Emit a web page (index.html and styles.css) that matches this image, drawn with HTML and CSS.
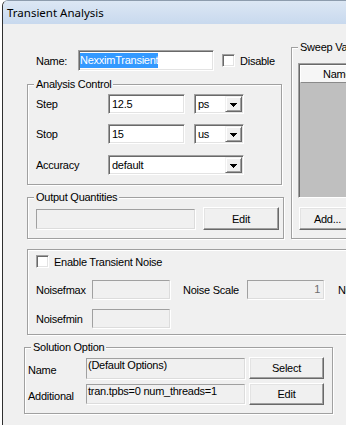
FILE: index.html
```html
<!DOCTYPE html>
<html lang="en">

<head>
  <meta charset="UTF-8">
  <meta name="viewport" content="width=device-width, initial-scale=1.0">
  <title>Transient Analysis</title>
  <link rel="stylesheet" href="styles.css">
</head>

<body>
  <div class="window">
    <div class="titlebar">Transient Analysis</div>

    <div class="client">
      <div class="top">
        <div class="left-col">
          <div class="name-row">
            <span class="name-label">Name:</span>
            <div class="field name-field"><span class="selected">NexximTransient</span></div>
            <span class="check disable-check"></span>
            <span class="check-text">Disable</span>
          </div>

          <div class="group analysis">
            <div class="caption">Analysis Control</div>
            <div class="ctl-row first">
              <span class="ctl-label">Step</span>
              <div class="field value">12.5</div>
              <div class="field combo unit">ps
                <span class="drop"><svg width="7" height="4" viewBox="0 0 7 4" shape-rendering="crispEdges"><path d="M0 0h7v1h-1v1h-1v1h-1v1h-1v-1h-1v-1h-1v-1h-1z" fill="#000"/></svg></span>
              </div>
            </div>
            <div class="ctl-row">
              <span class="ctl-label">Stop</span>
              <div class="field value">15</div>
              <div class="field combo unit">us
                <span class="drop"><svg width="7" height="4" viewBox="0 0 7 4" shape-rendering="crispEdges"><path d="M0 0h7v1h-1v1h-1v1h-1v1h-1v-1h-1v-1h-1v-1h-1z" fill="#000"/></svg></span>
              </div>
            </div>
            <div class="ctl-row last">
              <span class="ctl-label">Accuracy</span>
              <div class="field combo accuracy">default
                <span class="drop"><svg width="7" height="4" viewBox="0 0 7 4" shape-rendering="crispEdges"><path d="M0 0h7v1h-1v1h-1v1h-1v1h-1v-1h-1v-1h-1v-1h-1z" fill="#000"/></svg></span>
              </div>
            </div>
          </div>

          <div class="group output">
            <div class="caption">Output Quantities</div>
            <div class="out-row">
              <div class="field disabled out-field"></div>
              <button class="btn out-edit">Edit</button>
            </div>
          </div>
        </div>

        <div class="group sweep">
          <div class="caption">Sweep Variables</div>
          <div class="list">
            <div class="list-head">Name</div>
          </div>
          <button class="btn add">Add...</button>
        </div>
      </div>

      <div class="group noise">
        <div class="noise-check">
          <span class="check"></span>
          <span class="check-text">Enable Transient Noise</span>
        </div>
        <div class="noise-row first">
          <span class="nlabel">Noisefmax</span>
          <div class="field disabled nfield"></div>
          <span class="nlabel scale">Noise Scale</span>
          <div class="field disabled nfield scale-field">1</div>
          <span class="nlabel seed">Noise Seed</span>
        </div>
        <div class="noise-row">
          <span class="nlabel">Noisefmin</span>
          <div class="field disabled nfield"></div>
        </div>
      </div>

      <div class="group solution">
        <div class="caption">Solution Option</div>
        <div class="sol-row">
          <span class="sol-label">Name</span>
          <div class="field disabled sol-field">(Default Options)</div>
          <button class="btn">Select</button>
        </div>
        <div class="sol-row second">
          <span class="sol-label">Additional</span>
          <div class="field disabled sol-field">tran.tpbs=0 num_threads=1</div>
          <button class="btn">Edit</button>
        </div>
      </div>
    </div>
  </div>
</body>

</html>
```

FILE: styles.css
```css
html,
body {
  height: 100%;
  margin: 0;
  overflow: hidden;
  background: #fff;
}

body {
  font-family: "Liberation Sans", Arial, sans-serif;
  font-size: 11px;
  letter-spacing: -0.25px;
  color: #000;
}

.window {
  box-sizing: border-box;
  width: 420px;
  height: 100%;
  margin-left: 2px;
  border-left: 1px solid #2f2f2f;
  border-top: 1px solid #8d9cad;
  border-top-left-radius: 6px;
  background: #f0f0f0;
}

.titlebar {
  height: 23px;
  line-height: 23px;
  padding-left: 4px;
  font-family: "Noto Sans", "Open Sans", sans-serif;
  font-size: 11.5px;
  letter-spacing: 0;
  background: linear-gradient(#dce7f4, #c8d9ee);
  border-top-left-radius: 5px;
}

.client {
  padding: 23px 0 0 21px;
}

.top {
  display: flex;
  align-items: flex-start;
}

.left-col {
  flex: none;
  width: 257px;
  margin-left: 3px;
}

/* group boxes */
.group {
  box-sizing: border-box;
  border: 1px solid #a0a0a0;
  box-shadow: inset 1px 1px 0 #fff, 1px 1px 0 #fff;
}

.caption {
  display: table;
  margin: -7px 0 0 6px;
  padding: 0 2px;
  line-height: 13px;
  background: #f0f0f0;
}

/* sunken edit field */
.field {
  box-sizing: border-box;
  background: #fff;
  border: 1px solid;
  border-color: #a0a0a0 #fff #fff #a0a0a0;
  box-shadow: inset 1px 1px 0 #696969, inset -1px -1px 0 #e3e3e3;
}

.field.disabled {
  background: #f0f0f0;
  border-color: #a0a0a0 #dcdcdc #dcdcdc #a0a0a0;
  box-shadow: 1px 1px 0 #fff;
}

.btn {
  box-sizing: border-box;
  padding: 0;
  font: inherit;
  letter-spacing: inherit;
  color: #000;
  background: #f0f0f0;
  border: 1px solid;
  border-color: #fff #696969 #696969 #fff;
  box-shadow: inset -1px -1px 0 #a0a0a0, inset 1px 1px 0 #e3e3e3;
}

.check {
  flex: none;
  box-sizing: border-box;
  width: 13px;
  height: 13px;
  background: #fff;
  border: 1px solid;
  border-color: #a0a0a0 #fff #fff #a0a0a0;
  box-shadow: inset 1px 1px 0 #696969, inset -1px -1px 0 #e3e3e3;
}

.check-text {
  margin-left: 5px;
}

/* name row */
.name-row {
  display: flex;
  align-items: center;
  height: 21px;
  margin-top: 3px;
  padding-left: 9px;
}

.name-label {
  width: 42px;
}

.name-field {
  display: flex;
  align-items: center;
  width: 136px;
  height: 21px;
  padding-left: 1px;
}

.selected {
  line-height: 15px;
  background: #3399ff;
  color: #fff;
}

.disable-check {
  margin-left: 8px;
}

/* analysis control */
.analysis {
  width: 255px;
  height: 101px;
  margin-top: 13px;
}

.ctl-row {
  display: flex;
  align-items: center;
  height: 20px;
  margin: 10px 0 0 8px;
}

.ctl-row.first {
  margin-top: 3px;
}

.ctl-row.last {
  margin-top: 11px;
}

.ctl-label {
  width: 72px;
}

.value {
  width: 77px;
  height: 20px;
  padding-left: 3px;
  line-height: 18px;
}

.combo {
  display: flex;
  align-items: center;
  justify-content: space-between;
  height: 20px;
  padding: 1px 1px 1px 3px;
}

.unit {
  width: 50px;
  margin-left: 9px;
}

.accuracy {
  width: 136px;
}

.drop {
  display: flex;
  align-items: center;
  justify-content: center;
  box-sizing: border-box;
  width: 17px;
  height: 16px;
  padding-top: 1px;
  background: #f0f0f0;
  border: 1px solid;
  border-color: #f0f0f0 #696969 #696969 #f0f0f0;
  box-shadow: inset 1px 1px 0 #fff, inset -1px -1px 0 #a0a0a0;
}

/* output quantities */
.output {
  width: 257px;
  height: 42px;
  margin-top: 12px;
}

.out-row {
  display: flex;
  align-items: center;
  margin: 3px 0 0 8px;
}

.out-field {
  width: 159px;
  height: 20px;
}

.out-edit {
  width: 76px;
  height: 23px;
  margin-left: 8px;
}

/* sweep variables */
.sweep {
  flex: none;
  width: 120px;
  height: 192px;
  margin-left: 7px;
}

.list {
  box-sizing: border-box;
  height: 135px;
  margin: 9px 0 0 6px;
  background: #bfbfbf;
  border: 1px solid;
  border-color: #a0a0a0 #fff #fff #a0a0a0;
  box-shadow: inset 1px 1px 0 #696969;
}

.list-head {
  box-sizing: border-box;
  height: 18px;
  margin: 1px 0 0 1px;
  padding-left: 22px;
  line-height: 16px;
  background: #f6f6f6;
  border-top: 1px solid #fff;
  border-left: 1px solid #fff;
  border-bottom: 1px solid #8a8a8a;
}

.add {
  display: block;
  width: 57px;
  height: 23px;
  margin: 9px 0 0 7px;
}

/* transient noise */
.noise {
  width: 400px;
  height: 86px;
  margin: 10px 0 0 3px;
}

.noise-check {
  display: flex;
  align-items: center;
  height: 13px;
  margin: 5px 0 0 8px;
}

.noise-row {
  display: flex;
  align-items: center;
  height: 19px;
  margin: 10px 0 0 8px;
}

.noise-row.first {
  margin-top: 12px;
}

.nlabel {
  width: 56px;
}

.nlabel.scale {
  width: 64px;
  margin-left: 13px;
}

.nlabel.seed {
  width: auto;
  margin-left: 14px;
}

.nfield {
  width: 78px;
  height: 19px;
}

.scale-field {
  width: 77px;
  padding-right: 3px;
  line-height: 17px;
  text-align: right;
  color: #6d6d6d;
}

/* solution option */
.solution {
  width: 309px;
  height: 67px;
  margin-top: 12px;
}

.sol-row {
  display: flex;
  align-items: center;
  height: 22px;
  margin: 3px 0 0 3px;
}

.sol-row.second {
  margin-top: 4px;
}

.sol-label {
  width: 58px;
  padding-top: 3px;
}

.sol-field {
  width: 159px;
  height: 21px;
  padding: 0 1px;
  line-height: 13px;
}

.sol-row.second .sol-field {
  height: 20px;
}

.sol-row .btn {
  width: 75px;
  height: 22px;
  margin-left: 4px;
}
```
